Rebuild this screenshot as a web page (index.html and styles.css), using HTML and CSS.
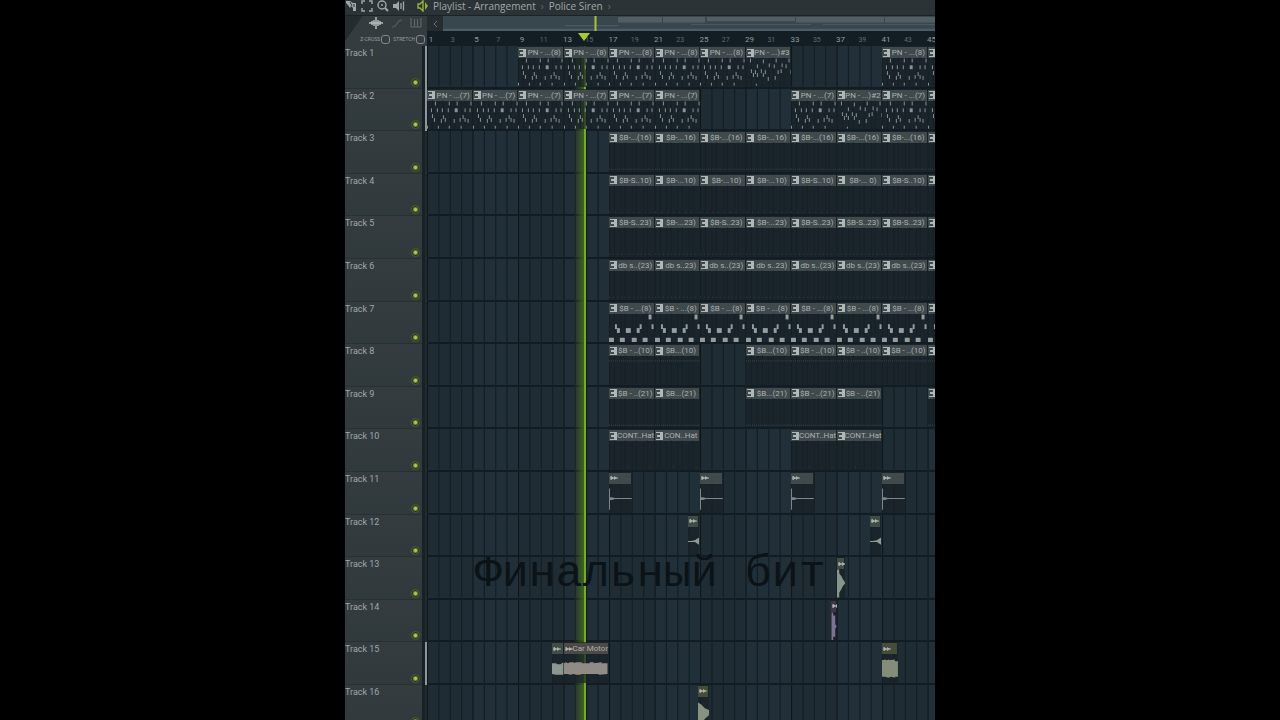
FILE: index.html
```html
<!DOCTYPE html>
<html lang="ru">
<head>
    <meta charset="UTF-8">
    <meta name="viewport" content="width=device-width, initial-scale=1.0">
    <title>Playlist - Arrangement</title>
    <link rel="stylesheet" href="styles.css">
</head>
<body>
    <main class="playlist">
        <header class="toolbar">
            <button type="button" aria-label="Paint">
                <svg width="12" height="12" viewBox="0 0 12 12"><path d="M1 1h4l3 2h3v8H8V8L6 6 5 8 3 5 1 3z" fill="currentColor"/><path d="M5 2l2 4M9 4v3" stroke="#2c3336"/></svg>
            </button>
            <button type="button" aria-label="Select">
                <svg width="12" height="12" viewBox="0 0 12 12"><path d="M1 4V1h3M8 1h3v3M11 8v3H8M4 11H1V8" fill="none" stroke="currentColor" stroke-width="1.4"/></svg>
            </button>
            <button type="button" aria-label="Zoom">
                <svg width="12" height="12" viewBox="0 0 12 12"><circle cx="5" cy="5" r="4" fill="none" stroke="currentColor" stroke-width="1.4"/><path d="M8 8l3 3" stroke="currentColor" stroke-width="2"/><circle cx="5" cy="5" r="1" fill="currentColor"/></svg>
            </button>
            <button type="button" aria-label="Playback">
                <svg width="12" height="12" viewBox="0 0 12 12"><path d="M0 4h3l3-3v10L3 8H0z" fill="currentColor"/><path d="M8 3v6M10.500 1.500v9" stroke="currentColor" stroke-width="1.300"/></svg>
            </button>
            <button type="button" class="speaker" aria-label="Preview">
                <svg width="12" height="12" viewBox="0 0 12 12"><path d="M1 4h2l3-3v10L3 8H1z" fill="none" stroke="currentColor" stroke-width="1.400"/><path d="M8 2l3 4-3 4z" fill="currentColor"/></svg>
            </button>
            <nav class="path">
                <span>Playlist - Arrangement</span>
                <i>›</i>
                <span>Police Siren</span>
                <i>›</i>
            </nav>
        </header>

        <section class="top">
            <div class="tools">
                <div class="modes">
                    <button type="button" aria-label="Audio clips">
                        <svg width="16" height="12" viewBox="0 0 16 12"><path d="M1 6h14M4 4v4M6 3v6M8 0v12M10 3v6M12 4v4" stroke="#b4babb" stroke-width="1.500"/></svg>
                    </button>
                    <button type="button" aria-label="Automation">
                        <svg width="12" height="12" viewBox="0 0 12 12"><path d="M1 10l3-1 4-5 3-1" fill="none" stroke="#4c5558" stroke-width="1.500"/></svg>
                    </button>
                    <button type="button" aria-label="Patterns">
                        <svg width="12" height="12" viewBox="0 0 12 12"><path d="M1 2v8h10V2M4.500 2v8M7.500 2v8M0 2h2M10 2h2" fill="none" stroke="#5c6568" stroke-width="1.200"/></svg>
                    </button>
                </div>
                <div class="snaps">
                    <label>Z-CROSS<input type="checkbox"></label>
                    <label>STRETCH<input type="checkbox"></label>
                </div>
            </div>
            <div class="timeline">
                <div class="scroll">
                    <button type="button" aria-label="Scroll left">
                        <svg width="6" height="8" viewBox="0 0 6 8"><path d="M5 1L2 4l3 3" fill="none" stroke="#666f73"/></svg>
                    </button>
                    <div class="overview">
                        <svg width="100%" height="100%" viewBox="0 0 492 14" preserveAspectRatio="none">
                            <path d="M0 13h492" stroke="#4b5d68" stroke-width="2"/>
                            <path d="M122 9h53M248 8h120M380 8h112" stroke="#4b5a60"/>
                            <path d="M175 1h44v5h-44zM220 1h42v5h-42zM264 1h88v4h-88zM353 1h88v5h-88zM442 1h50v5h-50z" fill="#525e62"/>
                            <path d="M152.500 0v14" stroke="#a4c43c" stroke-width="2"/>
                        </svg>
                    </div>
                </div>
                <div class="ruler" id="ruler"></div>
            </div>
        </section>

        <section class="tracks" id="tracks">
            <div class="playhead"></div>
        </section>

        <p class="caption">Финальный бит</p>
    </main>

    <script src="playlist.js"></script>
</body>
</html>
```

FILE: styles.css
```css
* {
    box-sizing: border-box;
}
body {
    margin: 0;
    background-color: #000;
    font-family: Roboto, "Noto Sans", sans-serif;
    color: #a0a7a8;
}
button {
    display: flex;
    padding: 0;
    border: none;
    background: none;
    color: inherit;
    cursor: pointer;
}
.playlist {
    position: relative;
    display: flex;
    flex-direction: column;
    height: 100vh;
    aspect-ratio: 59 / 72;
    margin: 0 auto;
    overflow: hidden;
    background-color: #1f2c34;
}

/* toolbar */
.toolbar {
    display: flex;
    align-items: center;
    gap: 4px;
    height: 15px;
    flex: none;
    padding-bottom: 3px;
    background-color: #2c3336;
}
.toolbar .speaker {
    margin-left: 8px;
    color: #94b23a;
}
.path {
    display: flex;
    gap: 5px;
    font-family: "Open Sans", sans-serif;
    font-size: 10px;
    line-height: 12px;
    white-space: nowrap;
}
.path i {
    color: #646c6e;
    font-style: normal;
}

/* tools, overview and ruler */
.top {
    display: flex;
    flex: none;
    height: 31px;
    border-top: 1px solid #1c2326;
}
.tools {
    display: flex;
    flex-direction: column;
    justify-content: space-between;
    width: 82px;
    padding: 1px 0 2px;
    background: linear-gradient(125deg, #252b2e 14px, #343c3f 15px);
}
.modes {
    display: flex;
    justify-content: flex-end;
    gap: 7px;
    padding-right: 5px;
}
.snaps {
    display: flex;
    justify-content: flex-end;
    gap: 3px;
    padding-right: 2px;
}
.snaps label {
    display: flex;
    align-items: center;
    gap: 1px;
    font-size: 5px;
    line-height: 10px;
    color: #959d9e;
}
.snaps input {
    appearance: none;
    width: 9px;
    height: 9px;
    margin: 0;
    border: 1px solid #81898a;
    border-radius: 3px;
}
.timeline {
    display: flex;
    flex: 1;
    flex-direction: column;
    min-width: 0;
}
.scroll {
    display: flex;
    height: 15px;
}
.scroll button {
    width: 16px;
    align-items: center;
    justify-content: center;
    background-color: #252d30;
}
.overview {
    flex: 1;
    background-color: #38464d;
}
.overview svg {
    display: block;
}
.ruler {
    position: relative;
    flex: 1;
    background-color: #131e24;
    overflow: hidden;
}
.ruler span {
    position: absolute;
    top: 3px;
    width: 12px;
    margin-left: -3px;
    text-align: center;
    font-size: 7px;
    line-height: 12px;
    color: #5f6b70;
}
.ruler .major {
    margin-left: -2px;
    font-size: 8px;
    color: #919a9c;
}
.ruler .marker {
    position: absolute;
    left: 31%;
    top: 2px;
    margin-left: -6px;
    border: 6px solid transparent;
    border-top: 8px solid #a5c937;
    border-bottom: none;
}

/* tracks */
.tracks {
    position: relative;
    flex: 1;
    min-height: 0;
    overflow: hidden;
}
.track {
    display: flex;
    height: 6.32%;
}
.head {
    display: flex;
    justify-content: space-between;
    width: 77px;
    padding: 1px 2px 1px 0;
    border-bottom: 1px solid #283033;
    background: linear-gradient(#343c3f, #30393c);
}
.head h2 {
    margin: 0;
    font-size: 9px;
    font-weight: normal;
    line-height: 12px;
    white-space: nowrap;
}
.led {
    align-self: flex-end;
    width: 9px;
    height: 9px;
    border: 1px solid #4b5e2b;
    border-radius: 50%;
    background: radial-gradient(#aebf6c 1px, #6f8a3a 2px, #29341f 3px);
}
.edge {
    width: 5px;
    border-right: 2px solid #202b31;
    background-color: #172126;
}
.edge.picked {
    border-right-color: #8b969d;
}
.lane {
    position: relative;
    flex: 1;
    min-width: 0;
    overflow: hidden;
    border-bottom: 2px solid #121d23;
}
.grid {
    position: absolute;
    inset: 0;
    width: 100%;
    height: 100%;
}
.clip {
    position: absolute;
    top: 0;
    bottom: 0;
    overflow: hidden;
    background-color: rgba(24, 33, 38, 0.7);
    z-index: 2;
}
.clip header {
    position: relative;
    display: flex;
    align-items: center;
    height: 11px;
    margin: 1px 1px 0 0;
    padding-left: 1px;
    background-color: #40494c;
    font-family: "Liberation Sans Narrow", Roboto, sans-serif;
    font-size: 8px;
    line-height: 11px;
    white-space: nowrap;
    color: #a9b0b0;
}
.clip header span {
    flex: 1;
    text-align: center;
}
.clip header svg {
    flex: none;
}
.clip .notes {
    position: absolute;
    inset: 0;
    width: 100%;
    height: 100%;
}
.clip.green header {
    background-color: #3f4d44;
}
.clip.olive header {
    background-color: #454d38;
}
.clip.purple header {
    background-color: #40354a;
}
.clip.brown header {
    background-color: #4d4944;
}
.playhead {
    position: absolute;
    top: 0;
    bottom: 0;
    left: 229px;
    width: 12px;
    border-right: 2px solid #76ab29;
    background: linear-gradient(90deg, rgba(60, 95, 20, 0), rgba(70, 115, 22, 0.8));
    z-index: 1;
}

.caption {
    position: absolute;
    left: 22%;
    top: 76%;
    margin: 0;
    font-family: "Liberation Mono", monospace;
    font-size: 45px;
    line-height: 56px;
    white-space: nowrap;
    color: #0b1317;
    z-index: 3;
}
```

FILE: playlist.js
```javascript
const BARS = 44.65;
const TRACKS = 16;
const ROW = 42;

// note lists are [x, y, w, h] inside a 46 x 42 clip
const melody = [
    [8, 13, 1, 4], [22, 13, 1, 4], [30, 13, 1, 4], [44, 13, 1, 4],
    [4, 20, 1, 4], [10, 20, 1, 4], [15, 20, 1, 4], [21, 20, 1, 4], [28, 20, 3, 4], [38, 20, 1, 4], [43, 20, 1, 4],
    [5, 26, 1, 4], [7, 30, 1, 4], [14, 31, 1, 4], [16, 27, 1, 4], [18, 30, 1, 4], [27, 31, 1, 4],
    [33, 30, 1, 4], [36, 27, 1, 4], [38, 30, 1, 4], [41, 31, 1, 4],
    [0, 38, 1, 3], [11, 38, 1, 3], [22, 38, 1, 3], [34, 38, 1, 3]
];
const variation = [
    [4, 13, 1, 4], [17, 14, 1, 4], [30, 13, 1, 4], [43, 13, 1, 4],
    [11, 19, 1, 4], [23, 18, 1, 4], [28, 19, 1, 4], [36, 18, 1, 4], [40, 19, 1, 4],
    [5, 24, 1, 4], [7, 28, 1, 4], [9, 25, 1, 4], [11, 28, 1, 4], [15, 24, 1, 4], [17, 28, 1, 4], [19, 25, 1, 4],
    [32, 25, 1, 4], [35, 24, 1, 4], [45, 25, 1, 4], [22, 32, 1, 4], [29, 31, 1, 4], [10, 39, 1, 2]
];
const bass = [
    [40, 13, 3, 5], [6, 23, 2, 5], [8, 27, 3, 5], [17, 27, 5, 5], [28, 27, 3, 5], [31, 23, 2, 5], [43, 23, 2, 5],
    [0, 37, 5, 5], [11, 37, 5, 5], [23, 37, 5, 5], [34, 37, 5, 5]
];
const dots = (y, step) => Array.from({ length: Math.floor(46 / step) }, (_, i) => [i * step, y, 1, 1]);

// the clip at bar 45 only shows its icon
const repeat = (starts, labels, notes, color) =>
    starts.map((start, i) => ({ start, length: 4, label: start < 45 ? labels[i % labels.length] : '', notes, color }));

const hit = '<path d="M0 17h1v9h2l3 1h17v1H6l-3 1H1v10H0z"/>';
const swell = '<path d="M0 27h6l8-1 9-3v8l-9-3H0z"/>';

const clips = {
    1: [
        ...repeat([9, 13, 17, 21, 25], ['PN - ...(8)'], melody),
        ...repeat([29], ['PN - ...)#3'], variation),
        ...repeat([41, 45], ['PN - ...(8)'], melody)
    ],
    2: [
        ...repeat([1, 5, 9, 13, 17, 21, 33], ['PN - ...(7)'], melody),
        ...repeat([37], ['PN - ...)#2'], variation),
        ...repeat([41, 45], ['PN - ...(7)'], melody)
    ],
    3: repeat([17, 21, 25, 29, 33, 37, 41, 45], ['$B-...(16)', '$B-...16)', '$B-...(16)', '$B-...16)', '$B-...(16)', '$B-...(16)', '$B-...(16)'], dots(39, 2), '#364147'),
    4: repeat([17, 21, 25, 29, 33, 37, 41, 45], ['$B-S..10)', '$B-...10)', '$B-...10)', '$B-...10)', '$B-S..10)', '$B-... 0)', '$B-S..10)'], dots(39, 6), '#364147'),
    5: repeat([17, 21, 25, 29, 33, 37, 41, 45], ['$B-S..23)', '$B-...23)', '$B-S..23)', '$B-...23)', '$B-S..23)', '$B-S..23)', '$B-S..23)'], dots(39, 4), '#364147'),
    6: repeat([17, 21, 25, 29, 33, 37, 41, 45], ['db s..(23)', 'db s..23)', 'db s..(23)', 'db s..23)', 'db s..(23)', 'db s..(23)', 'db s..(23)'], dots(39, 4), '#364147'),
    7: repeat([17, 21, 25, 29, 33, 37, 41, 45], ['$B - ...(8)'], bass, '#949e9f'),
    8: repeat([17, 21, 29, 33, 37, 41, 45], ['$B - ..(10)', '$B...(10)', '$B...(10)', '$B - ..(10)', '$B - ..(10)', '$B - ..(10)'], dots(17, 2), '#3d494d'),
    9: repeat([17, 21, 29, 33, 37, 45], ['$B - ..(21)', '$B...(21)', '$B...(21)', '$B - ..(21)', '$B - ..(21)'], dots(39, 2), '#3d484c'),
    10: repeat([17, 21, 33, 37], ['CONT..Hat', 'CON..Hat', 'CONT..Hat', 'CONT..Hat'], [[18, 39, 1, 1], [41, 39, 1, 1]], '#364147'),
    11: [17, 25, 33, 41].map(start => ({ start, length: 2, wave: hit, color: '#7d878b' })),
    12: [23.9, 39.9].map(start => ({ start, length: 1, kind: 'green', wave: swell, color: '#8f9b96' })),
    13: [{ start: 37, length: 0.75, kind: 'green', wave: '<path d="M0 13h6v4l6 3 4 3 7 4-7 3-5 4-5 3v5H0z"/>', color: '#87968a' }],
    14: [{ start: 36.5, length: 0.5, kind: 'purple', wave: '<path d="M2 13h7v3h8v9l6 2-6 3v8H9v4H2z"/>', color: '#7d7291' }],
    15: [
        { start: 12, length: 1, kind: 'green', wave: '<path d="M0 22h8l3 1h6l6-2v13H8l-8-1z"/>', color: '#8b978f' },
        { start: 13, length: 4, kind: 'brown', label: 'Car Motor', wave: '<path d="M0 22l1-1 1 1 1-1h2v1l1-1h3v1h4v-1h2v1l4-1v1h3v11l-4 1-1-1H9l-1 1H6l-1-1-2 1-1-1H0z"/>', color: '#908c85' },
        { start: 41, length: 1.4, kind: 'olive', wave: '<path d="M0 19l5-1 1 1 5-1v1l7-1 1 2h4v16h-4v1l-6-1-4 1-4-1H0z"/>', color: '#838d78' }
    ],
    16: [{ start: 24.8, length: 1, kind: 'olive', wave: '<path d="M0 18l6 2 8 4 9 2v5l-9 4-6 4H0z"/>', color: '#87927f' }]
};

const patternIcon = '<svg width="7" height="8" viewBox="0 0 7 8"><path d="M0 0h7v8H0V7h4V5H1V3h3V1H0z" fill="#b0b7b7"/></svg>';
const audioIcon = '<svg width="8" height="6" viewBox="0 0 8 6"><path d="M1 1v4M0 3h8" stroke="#aab1ae"/><path d="M1 1l3 2-3 2zM4 1l3 2-3 2z" fill="#aab1ae"/></svg>';

function percent(bars) {
    return (bars / BARS * 100) + '%';
}

function drawGrid() {
    let svg = '<svg class="grid" viewBox="0 0 508 42" preserveAspectRatio="none">';
    const bar = 508 / BARS;
    for (let i = 0; i < BARS; i++) {
        if (i % 8 >= 4) {
            svg += `<rect x="${i * bar}" width="${bar}" height="42" fill="#212f38"/>`;
        }
        svg += `<rect x="${i * bar}" width="1" height="42" fill="${i % 4 ? '#121d25' : '#0c161c'}"/>`;
    }
    return svg + '</svg>';
}

function drawClip(clip) {
    const element = document.createElement('div');
    element.className = 'clip ' + (clip.wave ? 'audio ' + (clip.kind || '') : 'pattern');
    element.style.left = percent(clip.start - 1);
    element.style.width = percent(clip.length);

    let shapes = clip.wave || '';
    if (clip.notes) {
        for (let i = 5; i < 46; i += 11) {
            shapes += `<rect x="${i}" y="12" width="1" height="30" fill="#162026"/>`;
        }
        clip.notes.forEach(([x, y, w, h]) => {
            shapes += `<rect x="${x}" y="${y}" width="${w}" height="${h}"/>`;
        });
    }
    const width = clip.wave ? 23 : 46;
    const label = clip.label ? `<span>${clip.label}</span>` : '';
    element.innerHTML = `
        <header>${clip.wave ? audioIcon : patternIcon}${label}</header>
        <svg class="notes" viewBox="0 0 ${width} ${ROW}" preserveAspectRatio="none" fill="${clip.color || '#899395'}">${shapes}</svg>`;
    return element;
}

const ruler = document.getElementById('ruler');
for (let bar = 1; bar <= 45; bar += 2) {
    const number = document.createElement('span');
    number.textContent = bar;
    number.className = bar % 4 === 1 ? 'major' : '';
    number.style.left = percent(bar - 1);
    ruler.append(number);
}
const marker = document.createElement('i');
marker.className = 'marker';
ruler.append(marker);

const tracks = document.getElementById('tracks');
for (let i = 1; i <= TRACKS; i++) {
    const track = document.createElement('div');
    track.className = 'track';
    track.innerHTML = `
        <div class="head"><h2>Track ${i}</h2><button type="button" class="led" aria-label="Mute track ${i}"></button></div>
        <div class="edge${[1, 2, 15].includes(i) ? ' picked' : ''}"></div>
        <div class="lane">${drawGrid()}</div>`;
    clips[i].forEach(clip => track.querySelector('.lane').append(drawClip(clip)));
    tracks.append(track);
}
```
